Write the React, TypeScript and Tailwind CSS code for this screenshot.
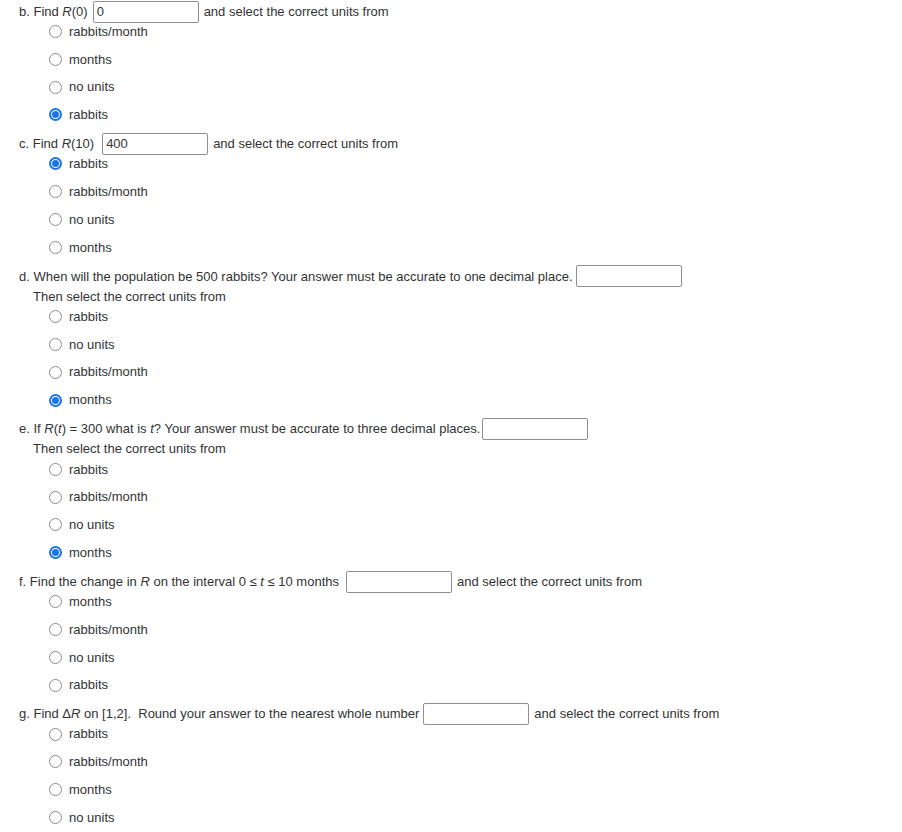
import React from "react";

type Q = {
  id: string;
  prompt: React.ReactNode;
  value?: string;
  gap: string;
  after?: string;
  thenLine?: boolean;
  options: string[];
  checked?: string;
};

const questions: Q[] = [
  {
    id: "b",
    prompt: (
      <>
        b. Find <i>R</i>(0)
      </>
    ),
    value: "0",
    gap: "ml-[5px]",
    after: "and select the correct units from",
    options: ["rabbits/month", "months", "no units", "rabbits"],
    checked: "rabbits",
  },
  {
    id: "c",
    prompt: (
      <>
        c. Find <i>R</i>(10)
      </>
    ),
    value: "400",
    gap: "ml-[8px]",
    after: "and select the correct units from",
    options: ["rabbits", "rabbits/month", "no units", "months"],
    checked: "rabbits",
  },
  {
    id: "d",
    prompt: "d. When will the population be 500 rabbits? Your answer must be accurate to one decimal place.",
    gap: "ml-[3px]",
    thenLine: true,
    options: ["rabbits", "no units", "rabbits/month", "months"],
    checked: "months",
  },
  {
    id: "e",
    prompt: (
      <>
        e. If <i>R</i>(<i>t</i>) = 300 what is <i>t</i>? Your answer must be accurate to three decimal places.
      </>
    ),
    gap: "ml-[2px]",
    thenLine: true,
    options: ["rabbits", "rabbits/month", "no units", "months"],
    checked: "months",
  },
  {
    id: "f",
    prompt: (
      <>
        f. Find the change in <i>R</i> on the interval 0 ≤ <i>t</i> ≤ 10 months
      </>
    ),
    gap: "ml-[7px]",
    after: "and select the correct units from",
    options: ["months", "rabbits/month", "no units", "rabbits"],
  },
  {
    id: "g",
    prompt: (
      <>
        g. Find Δ<i>R</i> on [1,2].&nbsp; Round your answer to the nearest whole number
      </>
    ),
    gap: "ml-[4px]",
    after: "and select the correct units from",
    options: ["rabbits", "rabbits/month", "months", "no units"],
  },
];

function Radio({ on }: { on: boolean }) {
  return on ? (
    <span className="flex h-[13px] w-[13px] shrink-0 items-center justify-center rounded-full border-2 border-[#1a73e8] bg-white">
      <span className="h-[7px] w-[7px] rounded-full bg-[#1a73e8]" />
    </span>
  ) : (
    <span className="h-[13px] w-[13px] shrink-0 rounded-full border border-[#8a8a8a] bg-white" />
  );
}

export default function App() {
  return (
    <div
      className="min-h-screen bg-white pl-[19px] pt-[1px] text-[13px] text-[#333333]"
      style={{ fontFamily: '"Liberation Sans", Arial, sans-serif' }}
    >
      {questions.map((q) => (
        <div key={q.id} className="mb-[9px]">
          <div className="flex h-[21.2px] items-center whitespace-nowrap">
            <span>{q.prompt}</span>
            <span
              className={`${q.gap} flex h-[22px] w-[106px] items-center rounded-[2px] border border-[#8f8f8f] bg-white px-[3px]`}
            >
              {q.value}
            </span>
            {q.after && <span className="ml-[5px]">{q.after}</span>}
          </div>
          {q.thenLine && (
            <div className="mb-[1.5px] flex h-[18.8px] items-center pl-[14px]">
              Then select the correct units from
            </div>
          )}
          <div className="flex flex-col gap-[9px]">
            {q.options.map((o) => (
              <label key={o} className="flex h-[18.8px] items-center pl-[30px]">
                <Radio on={q.checked === o} />
                <span className="ml-[7px]">{o}</span>
              </label>
            ))}
          </div>
        </div>
      ))}
    </div>
  );
}
